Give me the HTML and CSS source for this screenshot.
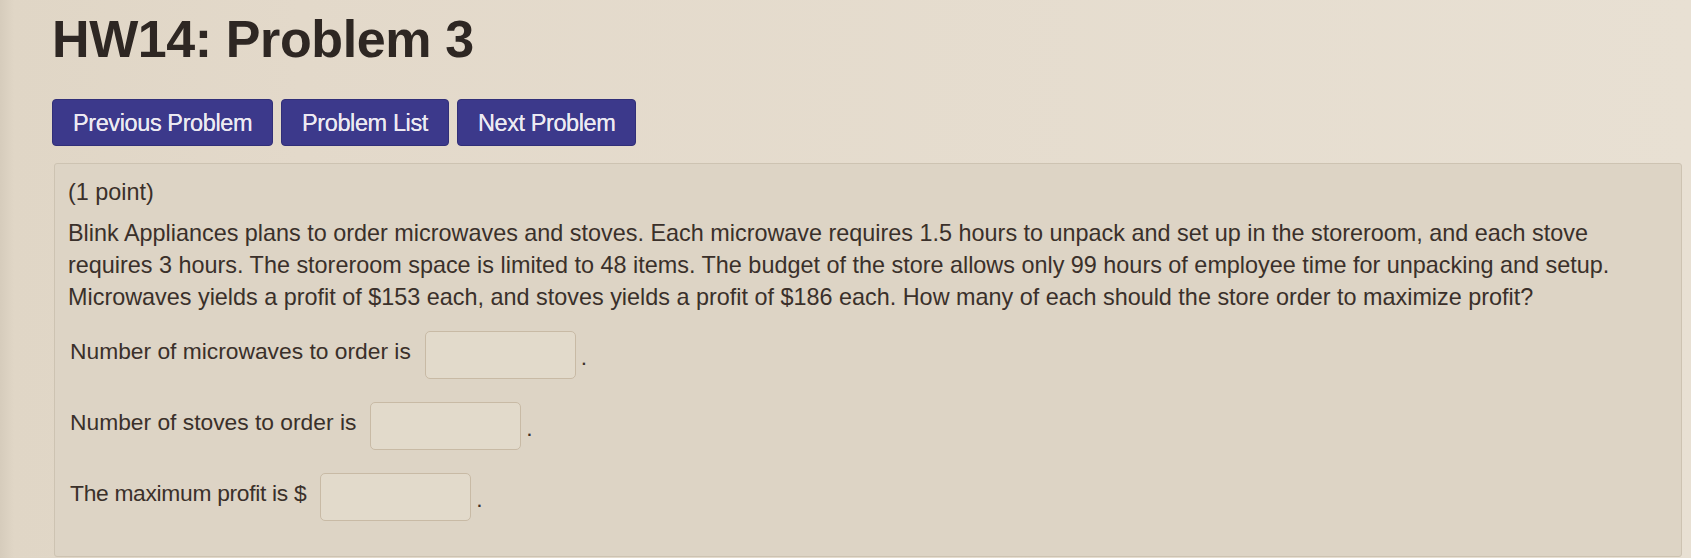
FILE: index.html
```html
<!DOCTYPE html>
<html lang="en">
<head>
<meta charset="utf-8">
<title>HW14: Problem 3</title>
<link rel="stylesheet" href="styles.css">
</head>
<body>
<div class="page">
  <h1 class="title">HW14: Problem 3</h1>
  <div class="nav">
    <a class="btn" href="#">Previous Problem</a>
    <a class="btn" href="#">Problem List</a>
    <a class="btn" href="#">Next Problem</a>
  </div>
  <div class="problem">
    <div class="points">(1 point)</div>
    <p class="text">Blink Appliances plans to order microwaves and stoves. Each microwave requires 1.5 hours to unpack and set up in the storeroom, and each stove requires 3 hours. The storeroom space is limited to 48 items. The budget of the store allows only 99 hours of employee time for unpacking and setup. Microwaves yields a profit of $153 each, and stoves yields a profit of $186 each. How many of each should the store order to maximize profit?</p>
    <div class="row"><span class="label">Number of microwaves to order is</span><input class="answer" type="text"><span class="dot">.</span></div>
    <div class="row"><span class="label">Number of stoves to order is</span><input class="answer" type="text"><span class="dot">.</span></div>
    <div class="row"><span class="label label-tight">The maximum profit is $</span><input class="answer" type="text"><span class="dot">.</span></div>
  </div>
</div>
</body>
</html>
```
FILE: styles.css
```css
html, body {
  margin: 0;
  padding: 0;
}
body {
  width: 1691px;
  height: 558px;
  overflow: hidden;
  background: linear-gradient(90deg, #d6ccbc 0px, #e0d6c6 14px, #e3d9ca 300px, #e8e0d3 1691px);
  font-family: "Liberation Sans", Arial, Helvetica, sans-serif;
  color: #3a302a;
}
.page {
  padding-left: 52px;
  padding-right: 9px;
}
.title {
  margin: 9px 0 0 0;
  font-size: 52px;
  line-height: 60px;
  font-weight: bold;
  color: #2e2723;
  letter-spacing: -0.4px;
}
.nav {
  display: flex;
  gap: 8px;
  margin-top: 30px;
}
.btn {
  display: block;
  height: 47px;
  line-height: 46px;
  padding: 0 20px;
  background: #3c398b;
  color: #eceaf2;
  font-size: 23.5px;
  text-decoration: none;
  border-radius: 4px;
  border: 1px solid #312f78;
  box-sizing: border-box;
  letter-spacing: -0.4px;
  text-shadow: 0 0 0.6px #eceaf2;
}
.problem {
  margin-top: 17px;
  margin-left: 2px;
  background: #ddd4c5;
  border: 1px solid #cdc3b2;
  border-radius: 3px;
  padding: 12px 13px 35px 13px;
  font-size: 23.4px;
  line-height: 32px;
}
.points {
  margin: 0;
}
.text {
  margin: 9px 0 0 0;
}
.row {
  display: flex;
  align-items: center;
  height: 48px;
  margin-top: 23px;
  padding-left: 2px;
  font-size: 22.8px;
}
.text + .row {
  margin-top: 18px;
}
.label {
  padding-bottom: 9px;
}
.label-tight {
  letter-spacing: -0.3px;
}
.answer {
  width: 151px;
  height: 48px;
  box-sizing: border-box;
  margin: 0 0 0 14px;
  background: #e2dacb;
  border: 1px solid #c8baa5;
  border-radius: 5px;
  font-size: 20px;
  padding: 0 8px;
}
.dot {
  margin-left: 5px;
  padding-top: 4px;
}
```
